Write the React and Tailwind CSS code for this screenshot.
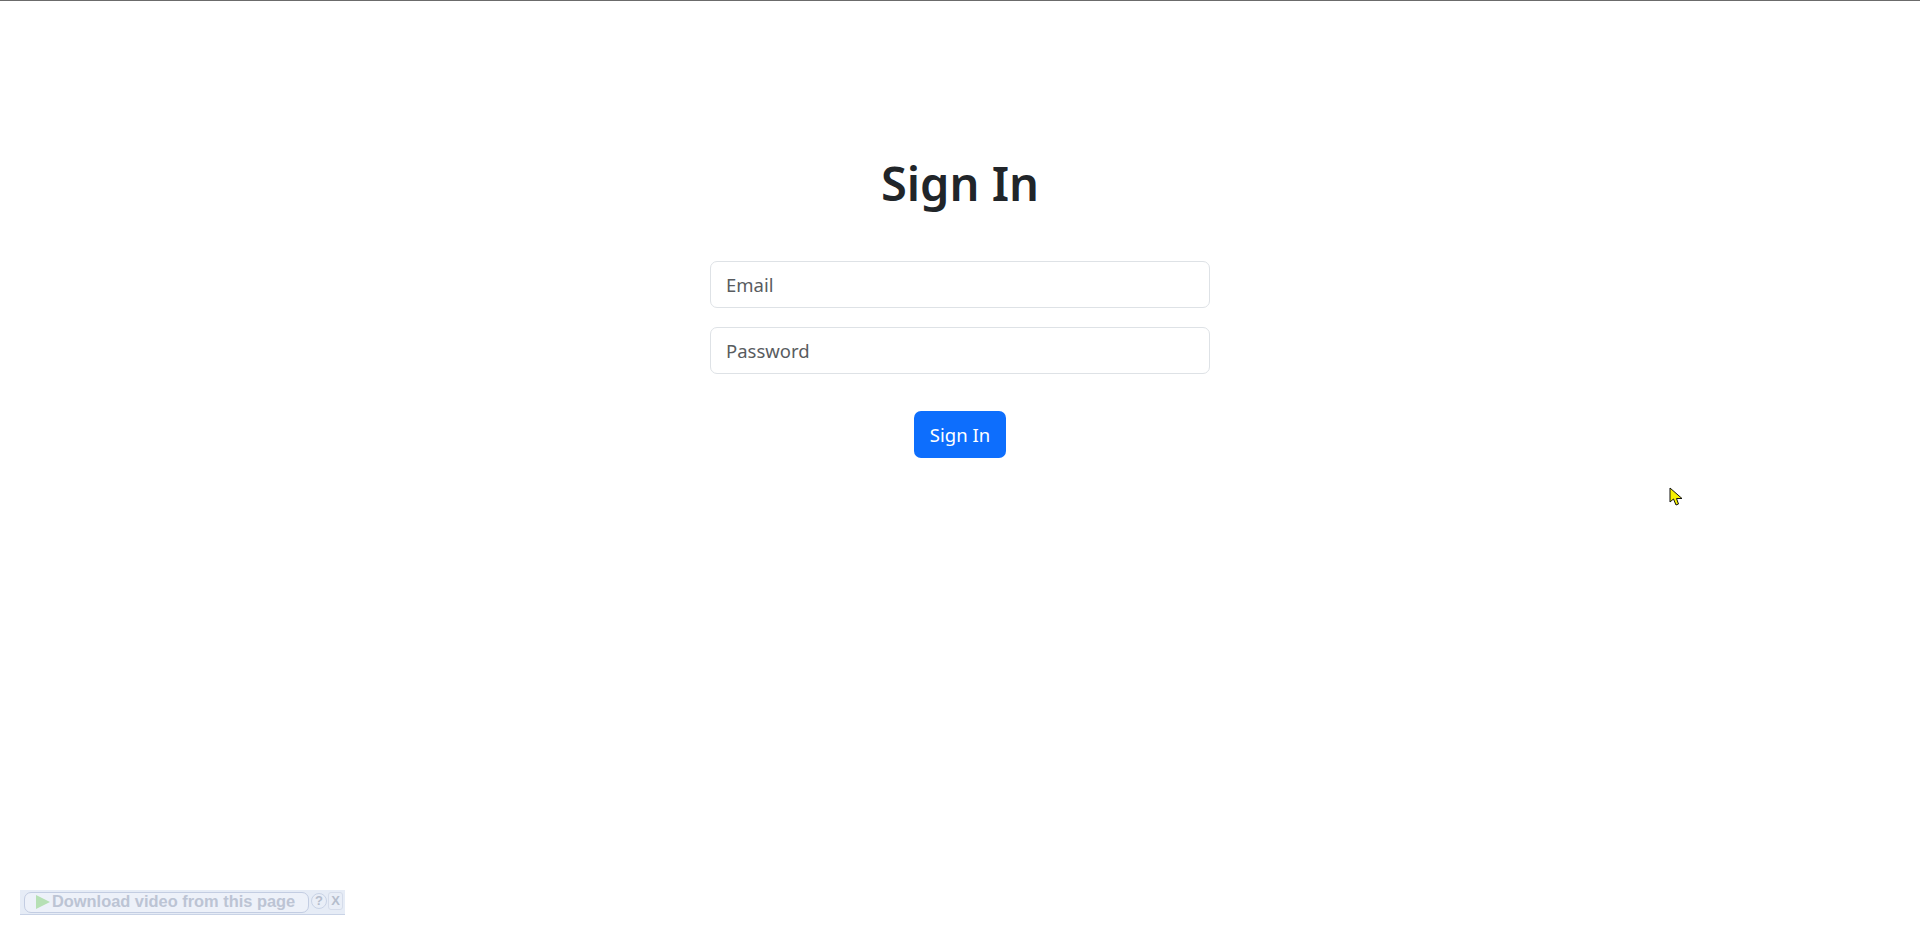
import React from "react";

const font = { fontFamily: '"Noto Sans", sans-serif' };

function DownloadBar() {
  return (
    <div className="absolute left-[20px] top-[889px] flex h-[25px] w-[325px] items-center border-b border-[#c9d3e6] bg-[#e6ecf6] pl-[4px] font-['Liberation_Sans',sans-serif]">
      <div className="flex h-[21px] w-[285px] items-center rounded-[7px] border border-[#c3cde2] bg-[#edf1f9] pb-[1px] pl-[10px]">
        <svg width="16" height="16" viewBox="0 0 16 16" className="mr-[1px]">
          <path d="M1 1 L15 8 L1 15 Z" fill="#b6e0b4" />
        </svg>
        <span className="text-[16.4px] leading-none font-bold whitespace-nowrap text-[#bcc4d4]">
          Download video from this page
        </span>
      </div>
      <div className="ml-[2px] mb-[2px] flex h-[16px] w-[16px] items-center justify-center rounded-full border border-[#c9d3e6] bg-[#e9eef7] text-[13px] font-bold text-[#b5bdcc]">
        ?
      </div>
      <div className="ml-[1px] mb-[2px] flex h-[18px] w-[15px] items-center justify-center rounded-[3px] border border-[#d5dcea] bg-[#e9eef7] text-[13px] font-bold text-[#b5bdcc]">
        X
      </div>
    </div>
  );
}

function Cursor() {
  return (
    <svg
      width="14"
      height="20"
      viewBox="0 0 14 20"
      className="absolute left-[1669px] top-[486px]"
    >
      <path
        d="M1 1 L1 15 L4.5 12 L7 18 L9.5 17 L7.5 11.5 L13 11.5 Z"
        fill="#f5f000"
        stroke="#111"
        strokeWidth="1"
      />
    </svg>
  );
}

export default function App() {
  return (
    <div
      className="relative flex h-[932px] flex-col items-center overflow-hidden border-t border-[#6b6b6b] bg-white"
      style={font}
    >
      <h1 className="mt-[153px] text-center text-[47px] leading-[58px] font-semibold text-[#212529]">
        Sign In
      </h1>
      <form className="mt-[49px] flex w-[500px] flex-col items-center">
        <input
          type="email"
          placeholder="Email"
          className="h-[47px] w-full rounded-[7px] border border-[#dee2e6] bg-white px-[15px] text-[18.5px] text-[#212529] placeholder:text-[#595c5f]"
        />
        <input
          type="password"
          placeholder="Password"
          className="mt-[19px] h-[47px] w-full rounded-[7px] border border-[#dee2e6] bg-white px-[15px] text-[18.5px] text-[#212529] placeholder:text-[#595c5f]"
        />
        <button
          type="button"
          className="mt-[37px] h-[47px] w-[92px] rounded-[7px] bg-[#0d6efd] pt-[1px] text-[18.5px] text-white"
        >
          Sign In
        </button>
      </form>
      <Cursor />
      <DownloadBar />
    </div>
  );
}
